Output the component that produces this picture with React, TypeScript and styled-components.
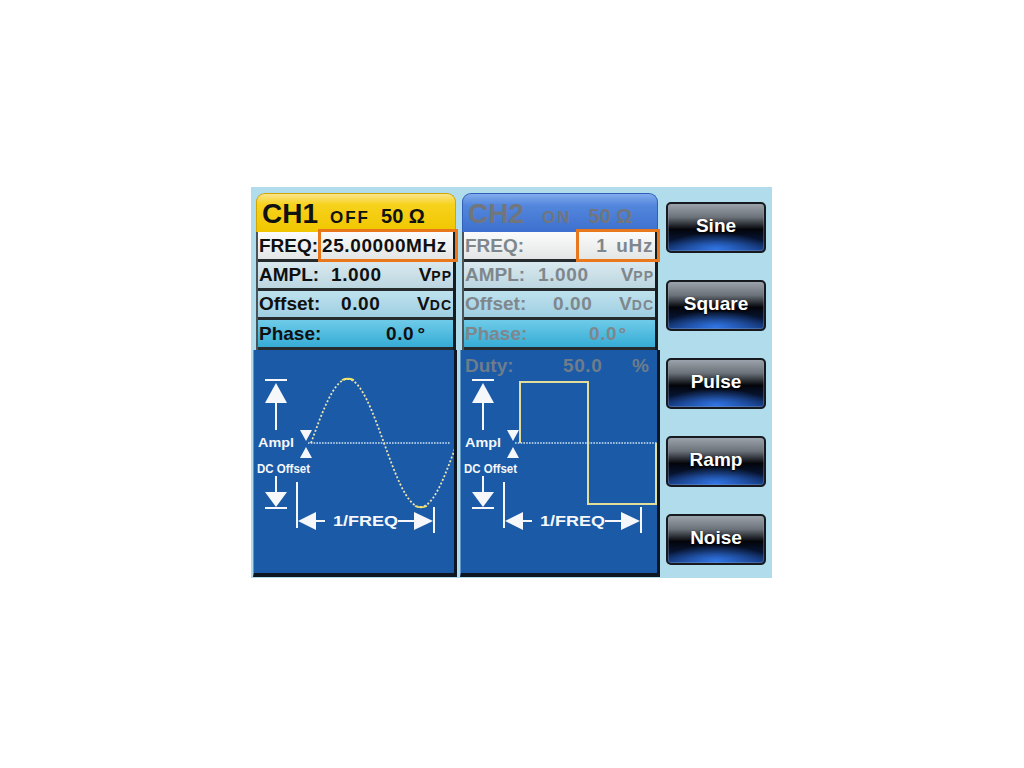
import styled, { createGlobalStyle } from 'styled-components';

const sans = `"Liberation Sans", Arial, sans-serif`;

const GlobalStyle = createGlobalStyle`
  body {
    margin: 0;
    background: #ffffff;
    font-family: ${sans};
  }
`;

type Tone = 'yellow' | 'blue';

const App = () => {
  return (
    <Page>
      <GlobalStyle />
      <Screen>
        <Channel $width={204}>
          <Tab $tone="yellow" $inset="0 1px 0 3px">
            <ChName>CH1</ChName>
            <State $gap={12}>OFF</State>
            <Load $gap={11}>50 Ω</Load>
          </Tab>
          <Params $inset="0 1px 0 3px">
            <Param $h={30} $bg="linear-gradient(180deg, #fbfbfb 0%, #e4e6e6 100%)">
              <Label $w={62}>FREQ:</Label>
              <FreqBox $align="flex-start" $width={135}>25.00000MHz</FreqBox>
            </Param>
            <Param $h={29} $bg="linear-gradient(180deg, #d9e9ef 0%, #bcd6e0 100%)">
              <Label $w={72}>AMPL:</Label>
              <Value>1.000</Value>
              <Unit $pad={1}>V<Sub>PP</Sub></Unit>
            </Param>
            <Param $h={29} $bg="linear-gradient(180deg, #bfe1ee 0%, #9fcfe2 100%)">
              <Label $w={82}>Offset:</Label>
              <Value>0.00</Value>
              <Unit $pad={1}>V<Sub>DC</Sub></Unit>
            </Param>
            <Param $h={30} $bg="linear-gradient(180deg, #6fcbe8 0%, #35acd6 100%)">
              <Label $w={127}>Phase:</Label>
              <Value>0.0</Value>
              <Unit $pad={28}>°</Unit>
            </Param>
          </Params>
          <Scope>
            <WaveSvg wave="sine" />
          </Scope>
        </Channel>

        <Channel $width={200}>
          <Tab $tone="blue" $inset="0 2px">
            <ChName>CH2</ChName>
            <State $gap={18}>ON</State>
            <Load $gap={17}>50 Ω</Load>
          </Tab>
          <Params $inset="0 2px" $dim>
            <Param $h={30} $bg="linear-gradient(180deg, #fbfbfb 0%, #e4e6e6 100%)">
              <Label $w={62}>FREQ:</Label>
              <FreqBox $align="flex-end" $width={78}>
                1<Spacer />uHz
              </FreqBox>
            </Param>
            <Param $h={29} $bg="linear-gradient(180deg, #d9e9ef 0%, #bcd6e0 100%)">
              <Label $w={73}>AMPL:</Label>
              <Value>1.000</Value>
              <Unit $pad={1}>V<Sub>PP</Sub></Unit>
            </Param>
            <Param $h={29} $bg="linear-gradient(180deg, #bfe1ee 0%, #9fcfe2 100%)">
              <Label $w={88}>Offset:</Label>
              <Value>0.00</Value>
              <Unit $pad={1}>V<Sub>DC</Sub></Unit>
            </Param>
            <Param $h={30} $bg="linear-gradient(180deg, #6fcbe8 0%, #35acd6 100%)">
              <Label $w={124}>Phase:</Label>
              <Value>0.0</Value>
              <Unit $pad={29}>°</Unit>
            </Param>
          </Params>
          <Scope>
            <WaveSvg wave="square" />
            <DutyLine>
              <Label $w={98}>Duty:</Label>
              <Value>50.0</Value>
              <Unit $pad={8}>%</Unit>
            </DutyLine>
          </Scope>
        </Channel>

        <SoftKeys>
          {['Sine', 'Square', 'Pulse', 'Ramp', 'Noise'].map((k) => (
            <SoftKey key={k}>{k}</SoftKey>
          ))}
        </SoftKeys>
      </Screen>
    </Page>
  );
};

export default App;

// sine, quarter period 36.5, starts on the centre line
const sinePath = () => {
  const pts: string[] = [];
  for (let t = 0; t <= 146; t += 1) {
    const x = 57 + t;
    const y = 93 - 64 * Math.sin((2 * Math.PI * t) / 146);
    pts.push(`${x.toFixed(1)},${y.toFixed(1)}`);
  }
  return 'M' + pts.join(' L');
};

const WaveSvg = ({ wave }: { wave: 'sine' | 'square' }) => (
  <svg width="200" height="223" style={{ display: 'block' }}>
    <line x1={54} y1={93} x2={196} y2={93} stroke="#cfe2f4" strokeWidth={1.6} strokeDasharray="1.6 1.2" />
    {wave === 'sine' ? (
      <>
        <path d={sinePath()} fill="none" stroke="#ece4b0" strokeWidth={1.8} strokeDasharray="2 2" />
        <path d="M88,30 Q94,27.5 100,30" fill="none" stroke="#f2e36a" strokeWidth={1.8} />
        <path d="M161,156 Q167,158.5 173,156" fill="none" stroke="#f2e36a" strokeWidth={1.8} />
      </>
    ) : (
      <polyline
        points="59,93 59,32 127,32 127,154 195,154 195,93"
        fill="none"
        stroke="#e3dd9c"
        strokeWidth={2}
      />
    )}
    <g fill="#f5f7fb" stroke="#f5f7fb">
      <line x1={11} y1={30} x2={33} y2={30} strokeWidth={2} />
      <polygon points="22,33 11,53 33,53" stroke="none" />
      <line x1={22} y1={52} x2={22} y2={80} strokeWidth={2} />
      <polygon points="46,80 58,80 52,91" stroke="none" />
      <polygon points="52,97 46,108 58,108" stroke="none" />
      <line x1={22} y1={126} x2={22} y2={143} strokeWidth={2} />
      <polygon points="11,142 33,142 22,157" stroke="none" />
      <line x1={11} y1={158} x2={33} y2={158} strokeWidth={2} />
      <line x1={43} y1={132} x2={43} y2={178} strokeWidth={2} />
      <polygon points="44,171 62,162 62,180" stroke="none" />
      <line x1={60} y1={171} x2={71} y2={171} strokeWidth={2} />
      <line x1={144} y1={171} x2={161} y2={171} strokeWidth={2} />
      <polygon points="160,162 160,180 179,171" stroke="none" />
      <line x1={180} y1={157} x2={180} y2={183} strokeWidth={2} />
    </g>
    <g fill="#f5f7fb" fontFamily={sans} fontWeight="bold" stroke="none">
      <text x={4} y={97} fontSize={13} textLength={36} lengthAdjust="spacingAndGlyphs">Ampl</text>
      <text x={3} y={123} fontSize={12} textLength={53} lengthAdjust="spacingAndGlyphs">DC Offset</text>
      <text x={79} y={176} fontSize={15} textLength={65} lengthAdjust="spacingAndGlyphs">1/FREQ</text>
    </g>
  </svg>
);

const Page = styled.div`
  padding: 187px 0 0 251px;
`;

const Screen = styled.div`
  width: 521px;
  height: 391px;
  box-sizing: border-box;
  padding: 6px 6px 1px 2px;
  background: #b0dcec;
  display: flex;
  gap: 3px;
`;

const Channel = styled.div<{ $width: number }>`
  width: ${(p) => p.$width}px;
  display: flex;
  flex-direction: column;
`;

const Tab = styled.div<{ $tone: Tone; $inset: string }>`
  margin: ${(p) => p.$inset};
  height: 39px;
  box-sizing: border-box;
  padding: 6px 0 0 5px;
  display: flex;
  align-items: baseline;
  line-height: 1;
  font-family: ${sans};
  font-weight: bold;
  border-radius: 9px 9px 0 0;
  border: 1px solid ${(p) => (p.$tone === 'yellow' ? '#d2a400' : '#2f5fb8')};
  border-bottom: none;
  background: ${(p) =>
    p.$tone === 'yellow'
      ? 'linear-gradient(180deg, #fbe58a 0%, #f6d21c 28%, #f1c600 100%)'
      : 'linear-gradient(180deg, #82acec 0%, #5386dc 30%, #3d70cf 100%)'};
  color: ${(p) => (p.$tone === 'yellow' ? '#111111' : '#70767c')};
`;

const ChName = styled.span`
  font-size: 28px;
`;

const State = styled.span<{ $gap: number }>`
  font-size: 17px;
  letter-spacing: 2px;
  margin-left: ${(p) => p.$gap}px;
`;

const Load = styled.span<{ $gap: number }>`
  font-size: 20px;
  margin-left: ${(p) => p.$gap}px;
`;

const Params = styled.div<{ $inset: string; $dim?: boolean }>`
  margin: ${(p) => p.$inset};
  border-left: 2px solid #4a5357;
  border-right: 3px solid #171b1e;
  color: ${(p) => (p.$dim ? '#7f878c' : '#101010')};
  font: bold 19px ${sans};
`;

const Param = styled.div<{ $h: number; $bg: string }>`
  height: ${(p) => p.$h}px;
  box-sizing: border-box;
  display: flex;
  align-items: center;
  padding: 0 0 0 1px;
  background: ${(p) => p.$bg};
  border-bottom: 3px solid #262b2e;
  white-space: nowrap;
`;

const Label = styled.span<{ $w: number }>`
  width: ${(p) => p.$w}px;
  flex: none;
`;

const Value = styled.span`
  letter-spacing: 0.6px;
`;

const Unit = styled.span<{ $pad: number }>`
  margin-left: auto;
  margin-right: ${(p) => p.$pad}px;
`;

const Sub = styled.span`
  font-size: 14px;
  letter-spacing: 1px;
`;

const FreqBox = styled.span<{ $align: string; $width: number }>`
  align-self: stretch;
  width: ${(p) => p.$width}px;
  box-sizing: border-box;
  margin-left: auto;
  margin-right: -2px;
  display: flex;
  align-items: center;
  justify-content: ${(p) => p.$align};
  padding: 0 4px 0 1px;
  letter-spacing: 0.6px;
  outline: 3px solid #e9781c;
  position: relative;
  z-index: 1;
`;

const Spacer = styled.span`
  width: 9px;
`;

const Scope = styled.div`
  position: relative;
  flex: 1;
  box-sizing: border-box;
  background: #1b5aa7;
  border-left: 1px solid #5f95c8;
  border-right: 3px solid #0e1622;
  border-bottom: 4px solid #0e1622;
  overflow: hidden;
`;

const DutyLine = styled.div`
  position: absolute;
  top: 5px;
  left: 4px;
  right: 0;
  display: flex;
  align-items: center;
  color: #6f7c8b;
  font: bold 19px ${sans};
`;

const SoftKeys = styled.div`
  width: 100px;
  margin-left: 3px;
  padding-top: 9px;
  display: flex;
  flex-direction: column;
  gap: 27px;
`;

const SoftKey = styled.button`
  height: 51px;
  width: 100px;
  box-sizing: border-box;
  border: 2px solid #16191d;
  border-radius: 5px;
  padding: 0 0 4px;
  color: #ffffff;
  font: bold 19px ${sans};
  text-shadow: 0 1px 2px #000;
  background:
    radial-gradient(ellipse 55% 35% at 50% 96%, rgba(50, 120, 235, 0.95), rgba(30, 80, 180, 0) 100%),
    linear-gradient(180deg, #9ca2aa 0%, #6c727a 28%, #22262c 46%, #03050a 54%, #071432 76%, #163e88 100%);
  box-shadow: inset 0 0 0 1px rgba(150, 160, 180, 0.35);
`;
